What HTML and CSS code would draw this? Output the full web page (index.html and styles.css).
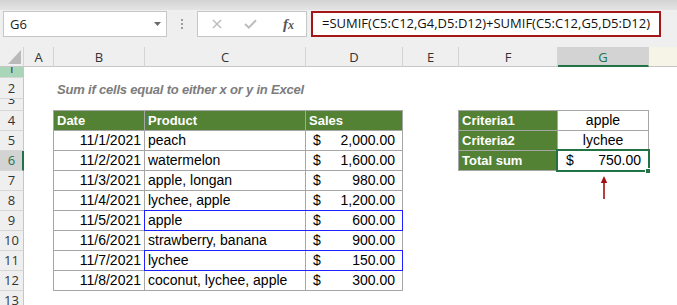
FILE: index.html
```html
<!DOCTYPE html>
<html>
<head>
<meta charset="utf-8">
<link rel="stylesheet" href="styles.css">
</head>
<body>
<div class="app">
  <div class="topstrip"></div>
  <div class="toolbar">
    <div class="namebox">
      <span>G6</span>
      <svg class="nb-arrow" width="7" height="4" viewBox="0 0 7 4"><path d="M0 0H7L3.5 4Z" fill="#6a6a6a"/></svg>
    </div>
    <div class="dots"><span></span><span></span><span></span></div>
    <div class="fxbox">
      <svg class="ic-x" width="10" height="10" viewBox="0 0 10 10"><path d="M1 1L9 9M9 1L1 9" stroke="#bdbdbd" stroke-width="1.5" fill="none"/></svg>
      <svg class="ic-ok" width="13" height="10" viewBox="0 0 13 10"><path d="M1 5L4.8 8.6L12 1.2" stroke="#bdbdbd" stroke-width="2" fill="none"/></svg>
      <span class="fx"><i>f</i><i class="fx-x">x</i></span>
    </div>
    <div class="formula">=SUMIF(C5:C12,G4,D5:D12)+SUMIF(C5:C12,G5,D5:D12)</div>
  </div>

  <div class="sheet">
    <div class="ch corner"><svg width="13" height="14" viewBox="0 0 13 14"><path d="M13 0V14H0Z" fill="#b9b9b9"/></svg></div>
    <div class="ch">A</div>
    <div class="ch">B</div>
    <div class="ch">C</div>
    <div class="ch">D</div>
    <div class="ch">E</div>
    <div class="ch">F</div>
    <div class="ch ch-act">G</div>
    <div class="ch ch-h"></div>

    <div class="rh rh-sel"><span class="n1">1</span></div>
    <div class="rh rh2"><span>2</span></div>
    <div class="rh"><span class="n3">3</span></div>
    <div class="rh"><span>4</span></div>
    <div class="rh"><span>5</span></div>
    <div class="rh rh-act"><span>6</span></div>
    <div class="rh"><span>7</span></div>
    <div class="rh"><span>8</span></div>
    <div class="rh"><span>9</span></div>
    <div class="rh"><span>10</span></div>
    <div class="rh"><span>11</span></div>
    <div class="rh"><span>12</span></div>
    <div class="rh rh-last"><span>13</span></div>

    <div class="title">Sum if cells equal to either x or y in Excel</div>

    <div class="tbl data">
      <div class="th">Date</div><div class="th">Product</div><div class="th">Sales</div>
      <div class="td r">11/1/2021</div><div class="td">peach</div><div class="td acc"><span>$</span><span>2,000.00</span></div>
      <div class="td r">11/2/2021</div><div class="td">watermelon</div><div class="td acc"><span>$</span><span>1,600.00</span></div>
      <div class="td r">11/3/2021</div><div class="td">apple, longan</div><div class="td acc"><span>$</span><span>980.00</span></div>
      <div class="td r">11/4/2021</div><div class="td">lychee, apple</div><div class="td acc"><span>$</span><span>1,200.00</span></div>
      <div class="td r">11/5/2021</div><div class="td">apple</div><div class="td acc"><span>$</span><span>600.00</span></div>
      <div class="td r">11/6/2021</div><div class="td">strawberry, banana</div><div class="td acc"><span>$</span><span>900.00</span></div>
      <div class="td r">11/7/2021</div><div class="td">lychee</div><div class="td acc"><span>$</span><span>150.00</span></div>
      <div class="td r">11/8/2021</div><div class="td">coconut, lychee, apple</div><div class="td acc"><span>$</span><span>300.00</span></div>
    </div>

    <div class="tbl crit">
      <div class="th">Criteria1</div><div class="td c">apple</div>
      <div class="th">Criteria2</div><div class="td c">lychee</div>
      <div class="th">Total sum</div><div class="td acc tot"><span>$</span><span>750.00</span></div>
    </div>

    <div class="hl hl-9"></div>
    <div class="hl hl-11"></div>
    <div class="sel"><span class="handle"></span></div>
    <svg class="arrow" width="8" height="24" viewBox="0 0 8 24"><path d="M4 0L7.2 7H0.8Z" fill="#a50f12"/><path d="M4 6V23" stroke="#a50f12" stroke-width="1.6"/></svg>
  </div>
</div>
</body>
</html>
```

FILE: styles.css
```css
* { box-sizing: border-box; margin: 0; padding: 0; }
body {
  margin: 0;
  width: 677px;
  height: 305px;
  overflow: hidden;
  background: #fff;
  font-family: "Liberation Sans", Arial, sans-serif;
}
.app { width: 677px; height: 305px; overflow: hidden; }

.topstrip { height: 10px; background: linear-gradient(#d3d3d3, #e4e4e4); }
.toolbar {
  height: 37px;
  background: #efefef;
  display: flex;
  align-items: flex-start;
  padding-top: 1px;
}
.namebox {
  margin-left: 3px;
  width: 164px;
  height: 26px;
  background: #fff;
  border: 1px solid #c6c6c6;
  display: flex;
  align-items: center;
  justify-content: space-between;
  padding: 0 5px 0 6px;
  font: 13px "Open Sans", sans-serif;
  color: #222;
}
.dots {
  width: 30px;
  height: 26px;
  display: flex;
  flex-direction: column;
  align-items: center;
  justify-content: center;
  gap: 2px;
}
.dots span { width: 2px; height: 2px; background: #9d9d9d; }
.fxbox {
  width: 110px;
  height: 26px;
  background: #fff;
  border: 1px solid #c6c6c6;
  display: flex;
  align-items: center;
}
.ic-x { margin-left: 14px; }
.ic-ok { margin-left: 22px; }
.fx {
  margin-left: 26px;
  font-family: "Liberation Serif", serif;
  font-size: 15px;
  color: #555;
  font-weight: bold;
  line-height: 1;
}
.fx-x { font-size: 12px; }
.formula {
  margin-left: 4px;
  width: 350px;
  height: 26px;
  border: 2px solid #a51619;
  background: #fff;
  font: 13px "Open Sans", sans-serif;
  color: #111;
  line-height: 21px;
  padding-left: 9px;
  white-space: nowrap;
  overflow: hidden;
}

.sheet {
  display: grid;
  grid-template-columns: 24px 30px 91px 161px 97px 56px 99px 91px 1fr;
  grid-template-rows: 20px 11px 21px 12px repeat(9, 20px) 1fr;
  height: 258px;
  background: #fff;
}
.ch {
  background: #efefef;
  border-right: 1px solid #d4d4d4;
  border-bottom: 1px solid #c6c6c6;
  display: flex;
  align-items: center;
  justify-content: center;
  font: 13px "Open Sans", sans-serif;
  color: #333;
  padding-top: 1px;
}
.corner { justify-content: flex-end; align-items: flex-end; padding: 0 2px 2px 0; }
.ch-act {
  background: #d3d3d3;
  border-bottom: 2px solid #217346;
  color: #217346;
}
.ch-h { background: #f6f4e6; border-right: none; }

.rh {
  grid-column: 1;
  background: #efefef;
  border-right: 1px solid #c6c6c6;
  border-bottom: 1px solid #d6d6d6;
  overflow: hidden;
  font: 13px "Open Sans", sans-serif;
  color: #333;
  text-align: center;
  line-height: 19px;
}
.rh span { display: block; }
.rh .n1 { margin-top: -8px; }
.rh .n3 { margin-top: -9px; }
.rh2 span { padding-top: 1px; }
.rh-sel { background: #a9d6b8; }
.rh-act {
  background: #d3d3d3;
  border-right: 2px solid #217346;
  color: #217346;
  padding-left: 1px;
}
.rh-last { border-bottom: none; }

.title {
  grid-column: 3 / 9;
  grid-row: 3;
  display: flex;
  align-items: center;
  padding: 1px 0 0 3px;
  font: italic bold 13px "Liberation Sans", Arial, sans-serif;
  letter-spacing: -0.2px;
  color: #7c7c7c;
  white-space: nowrap;
}

.tbl {
  display: grid;
  grid-auto-rows: 20px;
  margin: -1px 0 0 -1px;
  border-left: 1px solid #a6a6a6;
  border-top: 1px solid #a6a6a6;
}
.data { grid-column: 3 / 6; grid-row: 5 / 14; grid-template-columns: 91px 161px 97px; }
.crit { grid-column: 7 / 9; grid-row: 5 / 8; grid-template-columns: 99px 91px; }
.th, .td {
  border-right: 1px solid #a6a6a6;
  border-bottom: 1px solid #a6a6a6;
  line-height: 19px;
  white-space: nowrap;
  overflow: hidden;
}
.th {
  background: #548235;
  color: #fff;
  font-weight: bold;
  font-size: 13px;
  padding-left: 3px;
}
.td {
  font-size: 14px;
  color: #000;
  padding: 0 3px;
}
.td.r { text-align: right; padding-right: 3px; }
.td.c { text-align: center; }
.td.acc {
  display: flex;
  justify-content: space-between;
  padding: 0 7px 0 7px;
}
.td.tot { padding: 0 7px 0 8px; }

.hl {
  grid-column: 4 / 6;
  margin: -1px 0 0 -1px;
  border: 1px solid #1f1fff;
}
.hl-9 { grid-row: 10; }
.hl-11 { grid-row: 12; }

.sel {
  grid-column: 8;
  grid-row: 7;
  margin: -2px -1px -1px -2px;
  border: 2px solid #217346;
  position: relative;
}
.handle {
  position: absolute;
  right: -3px;
  bottom: -4px;
  width: 6px;
  height: 6px;
  background: #217346;
  border: 1px solid #fff;
}
.arrow {
  grid-column: 8;
  grid-row: 8 / 10;
  justify-self: center;
  align-self: start;
  margin-top: 5px;
}
```
